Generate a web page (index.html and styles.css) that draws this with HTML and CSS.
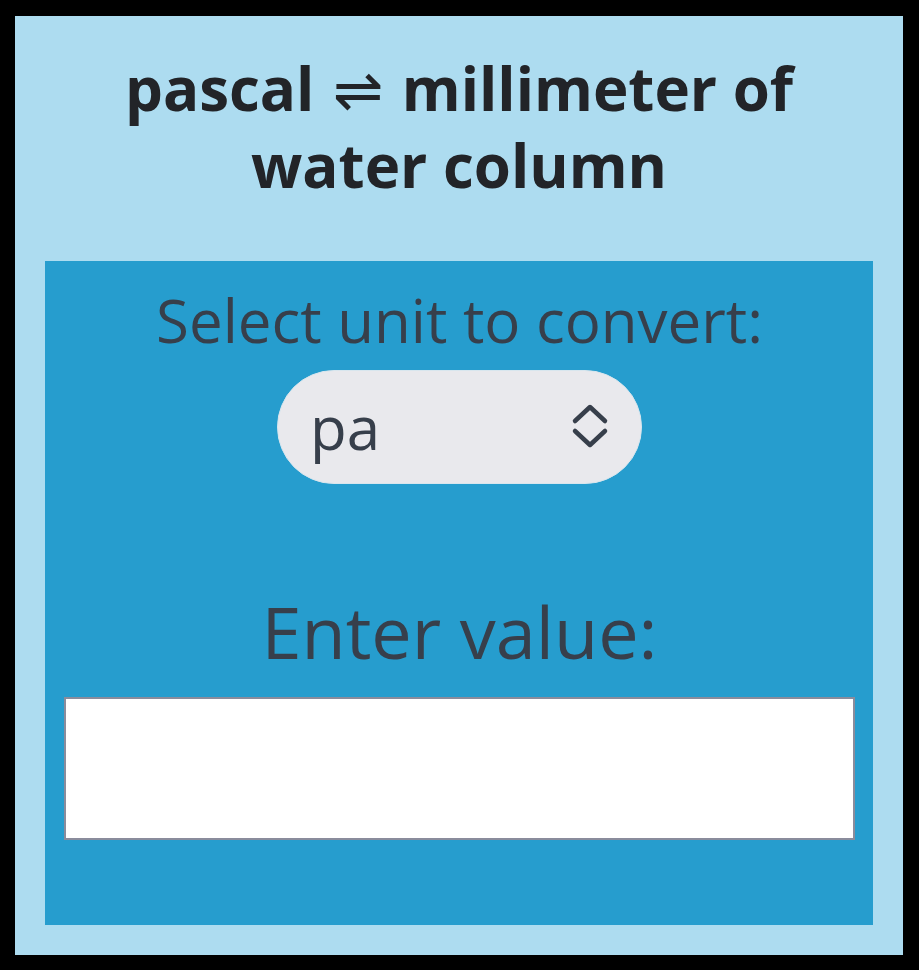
FILE: index.html
```html
<!DOCTYPE html>
<html lang="en">
<head>
  <meta charset="UTF-8" />
  <title>pascal ⇌ millimeter of water column</title>
  <link rel="stylesheet" href="styles.css">
</head>
<body>
  <div class="card">
    <h1>pascal <span class="flechas">⇌</span> millimeter of water column</h1>

    <div class="converter">
      <label for="unidad">Select unit to convert:</label>
      <div class="select-wrap">
        <select id="unidad">
          <option value="pa">pa</option>
          <option value="mmh2o">mmH2O</option>
        </select>
        <svg class="chevrons" width="38" height="46" viewBox="0 0 38 46">
          <polyline points="4,18 19,4 34,18" />
          <polyline points="4,28 19,42 34,28" />
        </svg>
      </div>

      <label for="valor" class="big">Enter value:</label>
      <input type="text" id="valor" />
    </div>
  </div>
</body>
</html>
```

FILE: styles.css
```css
html, body { margin: 0; }
body {
  background: #000;
  padding: 16px 16px 16px 15px;
  font-family: "Open Sans", sans-serif;
}
.card {
  background: #addcf0;
  padding: 34px 30px 30px;
}
h1 {
  margin: 0 0 57px;
  text-align: center;
  font-size: 60px;
  line-height: 77px;
  font-weight: 700;
  color: #222428;
}
.flechas {
  font-family: "DejaVu Sans", sans-serif;
  font-weight: 400;
  line-height: 0;
  margin: 0 3px;
}
.converter {
  background: #269dce;
  padding: 23px 18px 85px 19px;
  display: flex;
  flex-direction: column;
  align-items: center;
}
label {
  font-size: 60px;
  color: #373f4b;
  line-height: 72px;
}
label.big {
  font-size: 72px;
  line-height: 90px;
  margin-top: 102px;
}
.select-wrap {
  position: relative;
  margin-top: 14px;
}
select {
  -webkit-appearance: none;
  appearance: none;
  width: 365px;
  height: 114px;
  border: 1px solid #d8e6ee;
  border-radius: 57px;
  background: #e9e9ed;
  padding: 0 32px;
  font-family: "Open Sans", sans-serif;
  font-size: 60px;
  color: #373f4b;
}
.chevrons {
  position: absolute;
  right: 33px;
  top: 33px;
  pointer-events: none;
  fill: none;
  stroke: #373f4b;
  stroke-width: 4.5;
  stroke-linecap: round;
  stroke-linejoin: round;
}
input {
  box-sizing: border-box;
  width: 100%;
  height: 143px;
  margin-top: 21px;
  border: 2px solid #8a8c9c;
  background: #fff;
  font-size: 48px;
}
```
